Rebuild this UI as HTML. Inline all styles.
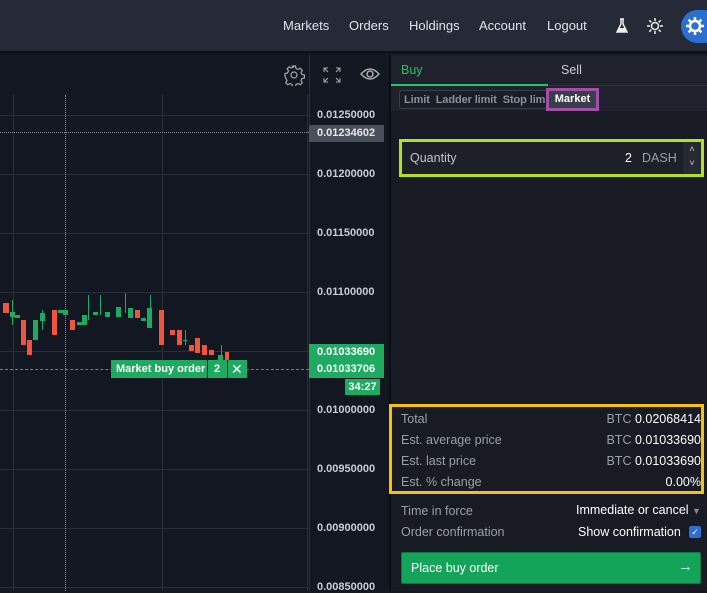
<!DOCTYPE html>
<html><head><style>
*{margin:0;padding:0;box-sizing:border-box}
body{width:707px;height:591px;overflow:hidden;background:#131722;font-family:"Liberation Sans",sans-serif;position:relative;color:#d1d4dc}
.a{position:absolute}
.hdr{left:0;top:0;width:707px;height:53px;background:#262a36;border-bottom:2px solid #0d0f14}
.nav{top:18px;font-size:13px;color:#e0e3ea}
.ax{font-size:11px;font-weight:bold;color:#c8ccd4;left:317px}
.hl{left:0;width:309px;height:1px;background:#2a2e39}
.vl{top:95px;width:1px;height:496px;background:#2a2e39}
.row{left:401px;font-size:12.5px;color:#9aa0aa}
.rv{right:6px;font-size:12.5px;color:#9aa0aa}
.rv b{color:#fff;font-weight:normal}
</style></head><body>
<div class="a hdr"></div>
<div class="a nav" style="left:283px">Markets</div>
<div class="a nav" style="left:349px">Orders</div>
<div class="a nav" style="left:409px">Holdings</div>
<div class="a nav" style="left:479px">Account</div>
<div class="a nav" style="left:547px">Logout</div>
<svg class="a" style="left:616px;top:18px" width="12" height="16"><path d="M4 1h4M5 1v5L1 14h10L7 6V1" fill="none" stroke="#eee" stroke-width="1.5"/><path d="M3 10h6l2 4H1z" fill="#eee"/></svg>
<svg class="a" style="left:646px;top:17px" width="18" height="18"><circle cx="9" cy="9" r="3.5" fill="none" stroke="#eee" stroke-width="1.5"/><path d="M9 1v3M9 14v3M1 9h3M14 9h3M3.3 3.3l2 2M12.7 12.7l2 2M3.3 14.7l2-2M12.7 5.3l2-2" stroke="#eee" stroke-width="1.5"/></svg>
<div class="a" style="left:681px;top:10px;width:40px;height:33px;border-radius:17px;background:#2d6fd1"></div>
<svg class="a" style="left:685px;top:16px" width="20" height="20"><circle cx="10" cy="10" r="5" fill="none" stroke="#fff" stroke-width="2.5"/><path d="M10 1v4M10 15v4M1 10h4M15 10h4M3.6 3.6l3 3M13.4 13.4l3 3M3.6 16.4l3-3M13.4 6.6l3-3" stroke="#fff" stroke-width="2.5"/></svg>

<!-- chart -->
<div class="a" style="left:309px;top:55px;width:81px;height:536px;background:#131722;border-left:1px solid #2a2e39"></div>
<div class="a" style="left:389px;top:55px;width:2px;height:536px;background:#0b0d12"></div>
<div class="a hl" style="top:115px"></div><div class="a hl" style="top:174px"></div><div class="a hl" style="top:233px"></div><div class="a hl" style="top:292px"></div><div class="a hl" style="top:351px"></div><div class="a hl" style="top:410px"></div><div class="a hl" style="top:469px"></div><div class="a hl" style="top:528px"></div><div class="a hl" style="top:587px"></div>
<div class="a vl" style="left:13px"></div><div class="a vl" style="left:162px"></div><div class="a vl" style="left:307px"></div>
<div class="a" style="left:65px;top:95px;height:496px;border-left:1px dotted #8a8e98"></div>
<div class="a" style="left:0;top:132px;width:309px;border-top:1px dotted #8a8e98"></div>
<div class="a" style="left:0;top:369px;width:309px;border-top:1px dashed #26a96a"></div>
<svg class="a" style="left:283px;top:64px" width="22" height="22" fill="none" stroke="#aaa" stroke-width="1.2"><circle cx="11" cy="11" r="3"/><path d="M9.5 2h3l.5 2.5 2 1 2.2-1.3 2.1 2.1-1.3 2.2 1 2 2.5.5v3l-2.5.5-1 2 1.3 2.2-2.1 2.1-2.2-1.3-2 1-.5 2.5h-3l-.5-2.5-2-1-2.2 1.3-2.1-2.1 1.3-2.2-1-2L2 12.5v-3l2.5-.5 1-2-1.3-2.2 2.1-2.1 2.2 1.3 2-1z"/></svg>
<svg class="a" style="left:323px;top:67px" width="18" height="16" stroke="#aaa" fill="none"><path d="M1 5V1h4M1 1l4 4M17 5V1h-4M17 1l-4 4M1 11v4h4M1 15l4-4M17 11v4h-4M17 15l-4-4"/></svg>
<svg class="a" style="left:360px;top:67px" width="20" height="14" fill="none" stroke="#aaa" stroke-width="1.5"><path d="M1 7Q10-3 19 7Q10 17 1 7z"/><circle cx="10" cy="7" r="3"/></svg>
<div class="a ax" style="top:109px">0.01250000</div>
<div class="a" style="left:309px;top:125px;width:75px;height:17px;background:#4a4f5c"></div>
<div class="a ax" style="top:127px;color:#e8e8e8">0.01234602</div>
<div class="a ax" style="top:168px">0.01200000</div>
<div class="a ax" style="top:227px">0.01150000</div>
<div class="a ax" style="top:286px">0.01100000</div>
<div class="a" style="left:309px;top:344px;width:75px;height:34px;background:#1faa62"></div>
<div class="a ax" style="top:346px;color:#fff">0.01033690</div>
<div class="a ax" style="top:363px;color:#fff">0.01033706</div>
<div class="a" style="left:345px;top:379px;width:35px;height:16px;background:#1faa62;color:#fff;font-size:11px;font-weight:bold;text-align:center;line-height:16px">34:27</div>
<div class="a ax" style="top:404px">0.01000000</div>
<div class="a ax" style="top:463px">0.00950000</div>
<div class="a ax" style="top:522px">0.00900000</div>
<div class="a ax" style="top:581px">0.00850000</div>
<svg class="a" style="left:0;top:290px" width="250" height="80">
<g stroke="#1faa62" stroke-width="1"><path d="M12.5 10v25M42.5 20v20M88.5 5v25M100.5 5v20M125.5 3v20M150.5 5v30M185.5 40v15M221.5 55v15"/></g>
<g fill="#f0553f"><rect x="3" y="13" width="6" height="10"/><rect x="21" y="30" width="5" height="25"/><rect x="27" y="50" width="5" height="15"/><rect x="52" y="20" width="5" height="25"/><rect x="70" y="30" width="5" height="10"/><rect x="135" y="20" width="5" height="8"/><rect x="159" y="20" width="5" height="35"/><rect x="170" y="40" width="5" height="5"/><rect x="177" y="40" width="5" height="15"/><rect x="189" y="55" width="5" height="6"/><rect x="195" y="48" width="5" height="15"/><rect x="202" y="55" width="5" height="10"/><rect x="209" y="60" width="5" height="5"/><rect x="225" y="62" width="4" height="10"/></g>
<g fill="#1faa62"><rect x="10" y="22" width="5" height="5"/><rect x="15" y="25" width="5" height="3"/><rect x="33" y="30" width="5" height="20"/><rect x="40" y="23" width="5" height="8"/><rect x="58" y="20" width="5" height="3"/><rect x="63" y="20" width="5" height="5"/><rect x="77" y="32" width="5" height="3"/><rect x="82" y="25" width="5" height="10"/><rect x="93" y="22" width="5" height="3"/><rect x="105" y="22" width="5" height="5"/><rect x="116" y="17" width="5" height="10"/><rect x="128" y="18" width="5" height="10"/><rect x="141" y="28" width="5" height="3"/><rect x="147" y="18" width="5" height="20"/><rect x="183" y="50" width="4" height="1"/><rect x="218" y="65" width="5" height="7"/></g>
</svg>
<div class="a" style="left:111px;top:360px;width:136px;height:18px;background:#1faa62;color:#fff;font-size:11px;font-weight:bold;line-height:18px">
<span style="padding-left:5px">Market buy order</span>
<span class="a" style="left:96px;top:0;width:1px;height:18px;background:#131722"></span>
<span class="a" style="left:103px">2</span>
<span class="a" style="left:116px;top:0;width:1px;height:18px;background:#131722"></span>
<span class="a" style="left:120px;font-size:14px;font-weight:normal">✕</span></div>

<!-- panel -->
<div class="a" style="left:391px;top:55px;width:316px;height:56px;background:#1f222c"></div>
<div class="a" style="left:391px;top:111px;width:316px;height:480px;background:#181b24"></div>
<div class="a" style="left:401px;top:63px;font-size:12.5px;color:#22c46a">Buy</div>
<div class="a" style="left:561px;top:63px;font-size:12.5px;color:#c8ccd4">Sell</div>
<div class="a" style="left:391px;top:85px;width:316px;height:1px;background:#2f333e"></div>
<div class="a" style="left:391px;top:84px;width:157px;height:2px;background:#22c46a"></div>
<div class="a" style="left:399px;top:90px;width:195px;height:19px;border:1px solid #3a3e4a;border-radius:3px;background:#1a1d26"></div>
<div class="a" style="left:404px;top:94px;font-size:11px;color:#8a909b;font-weight:bold;letter-spacing:-0.1px">Limit&nbsp; Ladder limit&nbsp; Stop limit</div>
<div class="a" style="left:546px;top:88px;width:53px;height:23px;border:3px solid #a24fa6;background:#3a3e4c;color:#fff;font-size:11px;font-weight:bold;text-align:center;line-height:17px">Market</div>
<div class="a" style="left:399px;top:139px;width:305px;height:38px;border:3px solid #b4e01f;background:#1d2029"></div>
<div class="a" style="left:410px;top:151px;font-size:12.5px;color:#c0c4cc">Quantity</div>
<div class="a" style="left:625px;top:151px;font-size:12.5px;color:#fff">2</div>
<div class="a" style="left:642px;top:151px;font-size:12.5px;color:#9aa0aa">DASH</div>
<div class="a" style="left:683px;top:142px;width:18px;height:32px;background:#262a35;color:#ccc;font-size:9px;text-align:center;line-height:14px">˄<br>˅</div>
<div class="a" style="left:389px;top:404px;width:315px;height:90px;border:3px solid #f6c20f"></div>
<div class="a row" style="top:412px">Total</div><div class="a rv" style="top:412px;right:6px">BTC <b>0.02068414</b></div>
<div class="a row" style="top:433px">Est. average price</div><div class="a rv" style="top:433px">BTC <b>0.01033690</b></div>
<div class="a row" style="top:454px">Est. last price</div><div class="a rv" style="top:454px">BTC <b>0.01033690</b></div>
<div class="a row" style="top:475px">Est. % change</div><div class="a rv" style="top:475px"><b>0.00%</b></div>
<div class="a row" style="top:504px">Time in force</div>
<div class="a" style="left:576px;top:503px;font-size:12.5px;color:#fff">Immediate or cancel <span style="color:#888;font-size:9px">▼</span></div>
<div class="a row" style="top:525px">Order confirmation</div>
<div class="a" style="left:578px;top:525px;font-size:12.5px;color:#fff">Show confirmation</div>
<div class="a" style="left:689px;top:526px;width:12px;height:12px;background:#2d6fd1;border-radius:2px;color:#fff;font-size:9px;text-align:center;line-height:12px">✓</div>
<div class="a" style="left:401px;top:552px;width:300px;height:32px;background:#13a45a;border-radius:2px;border:1px solid #0e7a43"></div>
<div class="a" style="left:411px;top:561px;font-size:12.5px;color:#fff">Place buy order</div>
<div class="a" style="left:678px;top:558px;font-size:15px;color:#cfe">→</div>
</body></html>
